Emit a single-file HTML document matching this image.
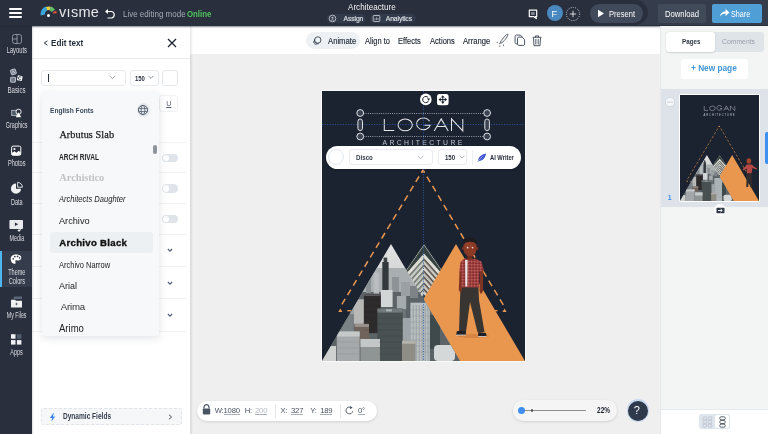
<!DOCTYPE html>
<html><head><meta charset="utf-8">
<style>
*{margin:0;padding:0;box-sizing:border-box}
html,body{width:768px;height:434px;overflow:hidden;background:#efefef;font-family:"Liberation Sans",sans-serif}
.a{position:absolute}
#top{left:0;top:0;width:768px;height:26px;background:#2a2f3d}
#side{left:0;top:26px;width:32px;height:408px;background:#2a2f3d}
#panel{left:32px;top:26px;width:158px;height:408px;background:#fff}
#canvas{left:190px;top:26px;width:470px;height:408px;background:#efefef}
#tbar{left:190px;top:26px;width:470px;height:28px;background:#fff}
#rpanel{left:660px;top:26px;width:108px;height:408px;background:#f3f5f5;border-left:1px solid #e6e9ec}
.lab{position:absolute;will-change:transform;left:-4px;width:40px;text-align:center;font-size:8.6px;line-height:1;color:#d9dbe0;transform:scaleX(0.64);white-space:nowrap}
.tog{position:absolute;left:161.6px;width:16px;height:8.3px;border-radius:5px;background:#dfe4ea}
.tog::after{content:"";position:absolute;left:1px;top:1px;width:6.3px;height:6.3px;border-radius:50%;background:#fff}
.tb{position:absolute;top:37.3px;font-size:8.5px;color:#232c38;-webkit-text-stroke:0.15px #232c38;white-space:nowrap;line-height:1;letter-spacing:-0.5px}
.bb{position:absolute;top:406.5px;font-size:7.7px;color:#4a5362;white-space:nowrap;line-height:1;letter-spacing:-0.2px}
.bb u{text-decoration:none;border-bottom:0.7px solid #a9afb7;display:inline-block;line-height:6.6px}
.t{position:absolute;white-space:nowrap;line-height:1}
</style></head><body><div id="root" style="position:absolute;left:0;top:0;width:768px;height:434px;will-change:transform">
<div id="top" class="a"></div>
<div class="a" style="left:620px;top:0;width:148px;height:25px;background:#353d4c"></div>
<div class="a" style="left:560px;top:0;width:87.5px;height:25px;border-radius:0 12.5px 12.5px 0;background:#2a2f3d"></div>
<div id="side" class="a"></div>
<!-- SIDEBAR -->
<div class="a" style="left:0;top:251px;width:32px;height:36px;background:#353d4c"></div>
<div class="a" style="left:0;top:251px;width:2px;height:36px;background:#4fb6f4"></div>
<svg class="a" style="left:0;top:26px" width="32" height="340" viewBox="0 26 32 340">
<!-- layouts -->
<rect x="12.5" y="34.5" width="9" height="9" rx="2" fill="none" stroke="#9a9ea8" stroke-width="0.85"/>
<path d="M17 34.5 V43.5 M12.5 39 H17" stroke="#9a9ea8" stroke-width="0.85"/>
<!-- basics -->
<g transform="rotate(-15 13.4 71.9)"><rect x="10.9" y="69.4" width="5" height="5" rx="0.6" fill="#6b7787" stroke="#c9cdd4" stroke-width="0.9"/><path d="M12.4 73.4 L13.4 70.5 L14.4 73.4" fill="none" stroke="#eef0f3" stroke-width="0.6"/></g>
<rect x="10.6" y="77.3" width="4.9" height="4.9" rx="0.5" fill="#6e7a8a" stroke="#c9cdd4" stroke-width="0.9"/>
<g transform="rotate(12 19.8 78.2)"><rect x="17.3" y="75.7" width="5" height="5" rx="0.6" fill="#f4f5f7"/><path d="M20.9 77.1 A1.5 1.5 0 1 0 20.9 79.3" fill="none" stroke="#2a2f3d" stroke-width="0.8"/></g>
<!-- graphics -->
<rect x="11.7" y="110.3" width="5.4" height="5.3" fill="#4f5a6a" stroke="#c0c5cc" stroke-width="0.8"/>
<circle cx="18.6" cy="111.8" r="2.6" fill="#2a2f3d" stroke="#fff" stroke-width="0.9"/>
<path d="M18.5 112.2 L21.2 117.2 H15.8 Z" fill="#fff"/>
<!-- photos -->
<rect x="11.6" y="146.1" width="9.2" height="9.2" rx="1.5" fill="none" stroke="#fff" stroke-width="1"/>
<circle cx="14.4" cy="149" r="1.1" fill="#fff"/>
<path d="M11.8 155 V153 L14.5 151.2 L16.5 152.8 L18.8 150.8 L20.6 152.5 V155 Z" fill="#fff"/>
<!-- data -->
<path d="M16 183.6 A5.1 5.1 0 1 0 21.1 188.7 H16 Z" fill="#eef0f2"/>
<path d="M17.6 182.4 A4.8 4.8 0 0 1 22.4 187.2 H17.6 Z" fill="none" stroke="#eef0f2" stroke-width="0.9"/>
<!-- media -->
<rect x="9.4" y="220" width="13.6" height="8.9" rx="1" fill="#e9ebee"/>
<path d="M14.9 222.6 L18.2 224.3 L14.9 226 Z" fill="#2a2f3d"/>
<path d="M20.3 224 V230.3" stroke="#e9ebee" stroke-width="0.9"/>
<ellipse cx="19" cy="230.6" rx="1.4" ry="1" fill="#e9ebee"/>
<!-- theme palette -->
<path d="M16 254.6 C11.5 254.6 10.7 257.8 10.7 259.3 C10.7 262 12.5 263.8 14.6 263.8 C15.8 263.8 15.8 262.6 15.4 261.7 C15 260.7 15.6 260 16.6 260.2 C18 260.5 19 260.6 20 260 C21 259.3 21.3 258.3 21.3 257.5 C21.3 255.8 19.2 254.6 16 254.6 Z" fill="#fff"/>
<circle cx="13.2" cy="258.8" r="0.9" fill="#353d4c"/><circle cx="14.8" cy="256.6" r="0.9" fill="#353d4c"/><circle cx="17.6" cy="256.3" r="0.9" fill="#353d4c"/><circle cx="19.6" cy="257.9" r="0.8" fill="#353d4c"/>
<!-- my files -->
<path d="M13.4 299 L14.3 296.6 H22 V299 Z" fill="#5b6778"/>
<path d="M11 299.7 H15 L16 300.8 H22 V307.6 H11 Z" fill="#eef0f2"/>
<path d="M16.5 302.5 L17.6 304 L16.5 305.5 L15.4 304 Z" fill="#555f6e"/>
<!-- apps -->
<rect x="11" y="334.2" width="4.5" height="4.5" fill="#f0f1f3"/>
<rect x="16.9" y="334.2" width="4.5" height="4.5" fill="#4f5c6d"/>
<rect x="11" y="340.1" width="4.5" height="4.5" fill="#f0f1f3"/>
<rect x="16.9" y="340.1" width="4.5" height="4.5" fill="#f0f1f3"/>
</svg>

<svg class="a" style="left:0;top:0;will-change:transform" width="32" height="434" viewBox="0 0 32 434">
<text x="6.7" y="53.2" textLength="20.2" lengthAdjust="spacingAndGlyphs" font-family="Liberation Sans" font-size="9.2" fill="#dddfe3">Layouts</text>
<text x="7.5" y="93.4" textLength="18.0" lengthAdjust="spacingAndGlyphs" font-family="Liberation Sans" font-size="9.2" fill="#dddfe3">Basics</text>
<text x="5.8" y="128.0" textLength="21.8" lengthAdjust="spacingAndGlyphs" font-family="Liberation Sans" font-size="9.2" fill="#dddfe3">Graphics</text>
<text x="7.9" y="165.6" textLength="17.6" lengthAdjust="spacingAndGlyphs" font-family="Liberation Sans" font-size="9.2" fill="#dddfe3">Photos</text>
<text x="11" y="204.7" textLength="11.7" lengthAdjust="spacingAndGlyphs" font-family="Liberation Sans" font-size="9.2" fill="#dddfe3">Data</text>
<text x="9.6" y="241.4" textLength="14.5" lengthAdjust="spacingAndGlyphs" font-family="Liberation Sans" font-size="9.2" fill="#dddfe3">Media</text>
<text x="8.2" y="274.8" textLength="17.2" lengthAdjust="spacingAndGlyphs" font-family="Liberation Sans" font-size="9.2" fill="#dddfe3">Theme</text>
<text x="8.7" y="283.5" textLength="16.3" lengthAdjust="spacingAndGlyphs" font-family="Liberation Sans" font-size="9.2" fill="#dddfe3">Colors</text>
<text x="6.8" y="318.0" textLength="19.7" lengthAdjust="spacingAndGlyphs" font-family="Liberation Sans" font-size="9.2" fill="#dddfe3">My Files</text>
<text x="10.3" y="355.0" textLength="12.4" lengthAdjust="spacingAndGlyphs" font-family="Liberation Sans" font-size="9.2" fill="#dddfe3">Apps</text>
</svg>
<div id="panel" class="a"></div>
<!-- LEFT PANEL -->
<svg class="a" style="left:43px;top:40px" width="6" height="6" viewBox="0 0 6 6"><path d="M4.4 0.8 L1.3 3 L4.4 5.2" fill="none" stroke="#1f2a38" stroke-width="1"/></svg>
<div class="t" style="left:50.5px;top:37.8px;font-size:9.6px;font-weight:bold;color:#1f2a38;transform:scaleX(0.85);transform-origin:0 0">Edit text</div>
<svg class="a" style="left:167px;top:38px" width="10" height="10" viewBox="0 0 10 10"><path d="M1 1 L9 9 M9 1 L1 9" stroke="#1d2633" stroke-width="1.3"/></svg>
<div class="a" style="left:32px;top:58px;width:158px;height:1px;background:#e9ecef"></div>
<div class="a" style="left:41px;top:70px;width:85px;height:15.5px;border:1px solid #e8ebee;border-radius:3px;background:#fff"></div>
<div class="a" style="left:48px;top:73.5px;width:1px;height:8px;background:#2b3340"></div>
<svg class="a" style="left:109px;top:75px" width="7" height="5" viewBox="0 0 7 5"><path d="M0.8 1 L3.5 3.6 L6.2 1" fill="none" stroke="#858d98" stroke-width="0.8"/></svg>
<div class="a" style="left:129.5px;top:70px;width:29px;height:15.5px;border:1px solid #e8ebee;border-radius:3px;background:#fff"></div>
<div class="t" style="left:135px;top:74.5px;font-size:7.2px;font-weight:bold;color:#2b3340;transform:scaleX(0.82);transform-origin:0 0">150</div>
<svg class="a" style="left:147.5px;top:75px" width="6" height="5" viewBox="0 0 6 5"><path d="M0.6 1 L3 3.4 L5.4 1" fill="none" stroke="#6f7782" stroke-width="0.8"/></svg>
<div class="a" style="left:161.5px;top:70px;width:16px;height:15.5px;border:1px solid #e3e7eb;border-radius:3px;background:#fff"></div>
<div class="a" style="left:159px;top:94.5px;width:18.6px;height:17.3px;border:1px solid #f0f2f4;border-radius:3px;background:#fff"></div>
<div class="t" style="left:166.3px;top:99.8px;font-size:7px;color:#505866;text-decoration:underline">U</div>
<div class="a" style="left:32px;top:141.5px;width:154px;height:1px;background:#f0f2f4"></div>
<div class="a" style="left:32px;top:172px;width:154px;height:1px;background:#f0f2f4"></div>
<div class="a" style="left:32px;top:203px;width:154px;height:1px;background:#f0f2f4"></div>
<div class="a" style="left:32px;top:233.5px;width:154px;height:1px;background:#f0f2f4"></div>
<div class="a" style="left:32px;top:266px;width:154px;height:1px;background:#f0f2f4"></div>
<div class="a" style="left:32px;top:298px;width:154px;height:1px;background:#f0f2f4"></div>
<div class="a" style="left:32px;top:331px;width:154px;height:1px;background:#f0f2f4"></div>
<div class="tog" style="top:153.7px"></div>
<div class="tog" style="top:184.3px"></div>
<div class="tog" style="top:215px"></div>
<svg class="a" style="left:167px;top:248px" width="6" height="5" viewBox="0 0 6 5"><path d="M0.9 1 L3 3.2 L5.1 1" fill="none" stroke="#56657d" stroke-width="1.25"/></svg>
<svg class="a" style="left:167px;top:280.5px" width="6" height="5" viewBox="0 0 6 5"><path d="M0.9 1 L3 3.2 L5.1 1" fill="none" stroke="#56657d" stroke-width="1.25"/></svg>
<svg class="a" style="left:167px;top:312.8px" width="6" height="5" viewBox="0 0 6 5"><path d="M0.9 1 L3 3.2 L5.1 1" fill="none" stroke="#56657d" stroke-width="1.25"/></svg>
<!-- dropdown -->
<div class="a" style="left:41.8px;top:91.8px;width:117px;height:244px;background:#f7f8fa;border-radius:3px;box-shadow:0 2px 9px rgba(30,40,60,0.13)"></div>
<div class="t" style="left:49.5px;top:107px;font-size:7.85px;font-weight:bold;color:#3b4a5e;transform:scaleX(0.84);transform-origin:0 0">English Fonts</div>
<div class="a" style="left:136.5px;top:103.3px;width:13.5px;height:13.5px;border-radius:50%;background:#e6eaee"></div>
<svg class="a" style="left:137.3px;top:103.7px" width="12" height="12" viewBox="0 0 12 12"><circle cx="6" cy="6" r="4.6" fill="none" stroke="#4b5565" stroke-width="0.9"/><ellipse cx="6" cy="6" rx="1.9" ry="4.6" fill="none" stroke="#4b5565" stroke-width="0.75"/><path d="M1.6 4.4 H10.4 M1.6 7.6 H10.4" stroke="#4b5565" stroke-width="0.75"/></svg>
<div class="a" style="left:153.3px;top:145.4px;width:3.5px;height:8.3px;border-radius:2px;background:#8e949c"></div>
<div class="t" style="left:59.4px;top:130px;font-family:'Liberation Serif',serif;font-size:10.2px;color:#1a1a1a;-webkit-text-stroke:0.25px #1a1a1a;letter-spacing:0.1px">Arbutus Slab</div>
<div class="t" style="left:59.2px;top:152.6px;font-size:8.3px;font-weight:bold;color:#222;transform:scaleX(0.79);transform-origin:0 0">ARCH RIVAL</div>
<div class="t" style="left:59.3px;top:173px;font-family:'Liberation Serif',serif;font-weight:bold;font-size:10.5px;color:#c3c3c3;letter-spacing:-0.1px">Archistico</div>
<div class="t" style="left:59.3px;top:195px;font-size:8.6px;font-style:italic;color:#222;transform:scaleX(0.881);transform-origin:0 0">Architects Daughter</div>
<div class="t" style="left:59.3px;top:216px;font-size:9.8px;color:#222;transform:scaleX(0.936);transform-origin:0 0">Archivo</div>
<div class="a" style="left:49.5px;top:231.6px;width:103.5px;height:21px;border-radius:3px;background:#edf0f3"></div>
<div class="t" style="left:59.3px;top:237.8px;font-size:9.6px;font-weight:bold;color:#111;-webkit-text-stroke:0.35px #111;letter-spacing:0.3px">Archivo Black</div>
<div class="t" style="left:59px;top:259.5px;font-size:9.6px;color:#222;transform:scaleX(0.78);transform-origin:0 0">Archivo Narrow</div>
<div class="t" style="left:59px;top:280.5px;font-size:9.7px;color:#222;transform:scaleX(0.928);transform-origin:0 0">Arial</div>
<div class="t" style="left:60.7px;top:301.8px;font-size:9.7px;color:#333;letter-spacing:-0.2px">Arima</div>
<div class="t" style="left:58.6px;top:323.5px;font-size:10.3px;color:#222;transform:scaleX(0.926);transform-origin:0 0">Arimo</div>
<!-- dynamic fields -->
<div class="a" style="left:41.2px;top:408.2px;width:140.7px;height:17.2px;border:1px dashed #dfe4ea;border-radius:3px;background:#f6f7f8"></div>
<svg class="a" style="left:49px;top:412.5px" width="7" height="9" viewBox="0 0 7 9"><path d="M4.2 0.3 L0.8 5 H3.2 L2.3 8.7 L6.2 3.6 H3.8 L5 0.3 Z" fill="#3b86ee"/></svg>
<div class="t" style="left:63px;top:412.6px;font-size:8.2px;font-weight:bold;color:#343c4a;transform:scaleX(0.8);transform-origin:0 0">Dynamic Fields</div>
<svg class="a" style="left:168px;top:414px" width="5" height="6" viewBox="0 0 5 6"><path d="M1 0.8 L3.6 3 L1 5.2" fill="none" stroke="#3a4250" stroke-width="0.9"/></svg>

<div class="a" style="left:32px;top:26px;width:2px;height:408px;background:linear-gradient(90deg,rgba(0,0,0,0.12),rgba(0,0,0,0))"></div>
<div id="canvas" class="a"></div>
<div id="tbar" class="a"></div>
<div class="a" style="left:190px;top:26px;width:3px;height:408px;background:linear-gradient(90deg,rgba(0,0,0,0.1),rgba(0,0,0,0))"></div>
<div class="a" style="left:0;top:26px;width:768px;height:2px;background:linear-gradient(180deg,rgba(30,35,48,0.55),rgba(30,35,48,0))"></div>
<!-- TOP BAR -->
<div class="a" style="left:9px;top:8px;width:13px;height:2px;background:#fff;border-radius:1px"></div>
<div class="a" style="left:9px;top:12px;width:13px;height:2px;background:#fff;border-radius:1px"></div>
<div class="a" style="left:9px;top:16px;width:13px;height:2px;background:#fff;border-radius:1px"></div>
<svg class="a" style="left:0;top:0" width="60" height="26" viewBox="0 0 60 26">
<path d="M40.77 15.46 A8.0 8.0 0 0 1 45.60 6.38 L47.25 10.46 A3.6 3.6 0 0 0 45.08 14.55 Z" fill="#3aa6de"/>
<path d="M45.83 6.94 A7.4 7.4 0 0 1 50.89 6.76 L49.77 10.19 A3.8 3.8 0 0 0 47.18 10.28 Z" fill="#e6d24a"/>
<path d="M50.95 6.57 A7.6 7.6 0 0 1 55.05 9.77 L51.48 12.00 A3.4 3.4 0 0 0 49.65 10.57 Z" fill="#62bd6c"/>
<path d="M56.20 10.73 A8.2 8.2 0 0 1 56.78 13.23 L53.19 13.48 A4.6 4.6 0 0 0 52.87 12.08 Z" fill="#e2553f"/>
<circle cx="48.5" cy="15.6" r="1.5" fill="#fff"/>
</svg>
<div class="t" style="left:59px;top:5px;font-size:14.5px;color:#e6e7ea;letter-spacing:0.3px">v&#305;sme</div>
<svg class="a" style="left:104px;top:8px" width="12" height="11" viewBox="0 0 12 11">
<path d="M3 3.5 H7.5 A3.3 3.3 0 0 1 7.5 10 H3.5" fill="none" stroke="#fff" stroke-width="1.2"/>
<path d="M1 3.5 L4 1 L4 6 Z" fill="#fff"/>
</svg>
<div class="t" style="left:122.5px;top:10px;font-size:8.6px;color:#a7abb4;transform:scaleX(0.929);transform-origin:0 0">Live editing mode</div>
<div class="t" style="left:186.5px;top:10px;font-size:8.6px;color:#4fc25d;font-weight:bold;transform:scaleX(0.907);transform-origin:0 0">Online</div>

<div class="t" style="left:348.3px;top:3px;font-size:8.8px;color:#f2f2f4;transform:scaleX(0.919);transform-origin:0 0">Architeacture</div>
<div class="a" style="left:327px;top:14px;width:39px;height:9.2px;border-radius:5px;background:#323b4b"></div>
<svg class="a" style="left:328px;top:14px" width="9" height="9" viewBox="0 0 9 9"><circle cx="4.5" cy="4.5" r="3.3" fill="none" stroke="#bfc3ca" stroke-width="0.9"/><circle cx="4.5" cy="3.8" r="1" fill="#bfc3ca"/><path d="M2.8 6.5 Q4.5 4.8 6.2 6.5" fill="none" stroke="#bfc3ca" stroke-width="0.8"/></svg>
<div class="t" style="left:343.5px;top:15.5px;font-size:6.8px;color:#dde0e5;-webkit-text-stroke:0.15px #dde0e5;letter-spacing:-0.1px">Assign</div>
<div class="a" style="left:370px;top:14px;width:46px;height:9.2px;border-radius:5px;background:#323b4b"></div>
<svg class="a" style="left:372px;top:14px" width="9" height="9" viewBox="0 0 9 9"><rect x="1.2" y="1.5" width="6.6" height="6" rx="0.8" fill="none" stroke="#bfc3ca" stroke-width="0.9"/><path d="M3 6 V4.5 M4.5 6 V3.3 M6 6 V4" stroke="#bfc3ca" stroke-width="0.7"/></svg>
<div class="t" style="left:385.8px;top:15.5px;font-size:6.8px;color:#dde0e5;-webkit-text-stroke:0.15px #dde0e5;letter-spacing:-0.12px">Analytics</div>

<svg class="a" style="left:528px;top:8.5px" width="11" height="11" viewBox="0 0 11 11"><path d="M1.3 1.2 H8.7 V7.6 H7.4 L8.4 9.6 L5.6 7.6 H1.3 Z" fill="#2a2f3d" stroke="#fff" stroke-width="1.2" stroke-linejoin="round"/><rect x="3" y="3.2" width="3.6" height="2.6" fill="#8a8f99"/></svg>
<div class="a" style="left:546.6px;top:5.1px;width:16.4px;height:16.4px;border-radius:50%;background:#4a89bf"></div>
<div class="t" style="left:551.5px;top:9.5px;font-size:9px;color:#fff">F</div>
<svg class="a" style="left:564.5px;top:5.5px" width="16" height="16" viewBox="0 0 16 16"><circle cx="8" cy="8" r="6.6" fill="none" stroke="#e9eaee" stroke-width="0.8" stroke-dasharray="1 1.2"/><path d="M8 4.8 V11.2 M4.8 8 H11.2" stroke="#fff" stroke-width="0.8"/></svg>
<div class="a" style="left:590px;top:4px;width:53px;height:19px;border-radius:10px;background:#414a5a"></div>
<svg class="a" style="left:597px;top:9px" width="8" height="9" viewBox="0 0 8 9"><path d="M1 0.8 L7 4.5 L1 8.2 Z" fill="#fff"/></svg>
<div class="t" style="left:608.7px;top:9.5px;font-size:8.6px;color:#fff;transform:scaleX(0.878);transform-origin:0 0">Present</div>
<div class="a" style="left:658px;top:4px;width:48px;height:19px;border-radius:2px;background:#414a59"></div>
<div class="t" style="left:665px;top:9.5px;font-size:8.4px;color:#fff;transform:scaleX(0.916);transform-origin:0 0">Download</div>
<div class="a" style="left:712px;top:4px;width:50px;height:19px;border-radius:2px;background:#4f9fd6"></div>
<svg class="a" style="left:719px;top:8px" width="11" height="10" viewBox="0 0 11 10"><path d="M1 8.5 C1.5 5 4 3.5 6.5 3.5 V1 L10.5 4.5 L6.5 8 V5.5 C4.5 5.5 2.5 6.2 1 8.5 Z" fill="#fff"/></svg>
<div class="t" style="left:731.3px;top:9.5px;font-size:8.4px;color:#fff;transform:scaleX(0.857);transform-origin:0 0">Share</div>

<!-- DESIGN -->
<div class="a" style="left:321px;top:90px;width:205px;height:272px;background:#fff;opacity:0.6"></div>
<svg class="a" style="left:322px;top:91px" width="203" height="270" viewBox="322 91 203 270">
<defs>
<clipPath id="cT"><path d="M391 244 L460 361 L322 361 Z"/></clipPath>
<clipPath id="sT"><path d="M424 244 L504 361 L344 361 Z"/></clipPath>
<linearGradient id="sky" x1="0" y1="0" x2="0" y2="1"><stop offset="0" stop-color="#e4e4e4"/><stop offset="0.3" stop-color="#cfd2d3"/><stop offset="0.55" stop-color="#9a9fa3"/><stop offset="1" stop-color="#6f7579"/></linearGradient>
<pattern id="plaid" width="3" height="3" patternUnits="userSpaceOnUse"><rect width="3" height="3" fill="#9a3737"/><path d="M0 0.7 H3 M0.7 0 V3" stroke="#c96a64" stroke-width="0.6"/><path d="M0 2.2 H3 M2.2 0 V3" stroke="#6e2428" stroke-width="0.4"/></pattern>
</defs>
<g id="scene"><rect x="322" y="91" width="203" height="270" fill="#1b2230"/>
<!-- dashed triangle -->
<path d="M423 170 L340.3 307 M423 170 L504.5 307" stroke="#e9974f" stroke-width="1.5" stroke-dasharray="6.4 4.6" stroke-dashoffset="3.4" fill="none"/>
<path d="M420.9 172.8 L425.1 172.8 L423 169.2 Z" fill="#e9974f"/><path d="M338.2 312 L342.4 312 L340.3 308.4 Z" fill="#e9974f"/><path d="M347.3 310.7 H351.3" stroke="#e9974f" stroke-width="1.4"/>
<path d="M502.4 312 L506.6 312 L504.5 308.4 Z" fill="#e9974f"/><path d="M497.5 310.7 H493.5" stroke="#e9974f" stroke-width="1.4"/>
<!-- stripes triangle -->
<g clip-path="url(#sT)">
<rect x="340" y="244" width="170" height="117" fill="#34403f"/>
<g fill="none" stroke-width="3.2">
<path d="M374 312 L424 256 L474 312" stroke="#dcdcd5"/>
<path d="M374 318 L424 262 L474 318" stroke="#c9cac3"/>
<path d="M374 324 L424 268 L474 324" stroke="#d6d6cf"/>
<path d="M374 330 L424 274 L474 330" stroke="#c2c3bc"/>
<path d="M374 336 L424 280 L474 336" stroke="#d2d2cb"/>
<path d="M374 342 L424 286 L474 342" stroke="#c5c5be"/>
<path d="M374 348 L424 292 L474 348" stroke="#d0d0c9"/>
</g>
<g fill="none" stroke-width="1.6">
<path d="M424 259.5 L474 315.5" stroke="#6b5f58"/>
<path d="M424 265.5 L474 321.5" stroke="#6e625a"/>
<path d="M424 271.5 L474 327.5" stroke="#675b54"/>
<path d="M424 277.5 L474 333.5" stroke="#6b5f58"/>
<path d="M424 283.5 L474 339.5" stroke="#6e625a"/>
<path d="M424 289.5 L474 345.5" stroke="#675b54"/>
<path d="M374 315.5 L424 259.5 M374 321.5 L424 265.5 M374 327.5 L424 271.5 M374 333.5 L424 277.5 M374 339.5 L424 283.5" stroke="#7d8581"/>
</g>
<path d="M424 244.6 L504 361 M424 244.6 L344 361" stroke="#b3b4ad" stroke-width="1" fill="none"/>
</g>
<!-- orange triangle -->
<path d="M456 244 L525 361 L387 361 Z" fill="#e9974f"/>
<!-- city triangle -->
<g clip-path="url(#cT)">
<rect x="322" y="244" width="140" height="117" fill="url(#sky)"/>
<rect x="322" y="290" width="140" height="71" fill="#5d6468"/>
<rect x="360" y="268" width="62" height="24" fill="#a9aeb1"/>
<rect x="366" y="279" width="5" height="14" fill="#8a9094"/>
<rect x="373.6" y="272.5" width="5.4" height="21" fill="#b9bdc0"/>
<rect x="392" y="277" width="7" height="15" fill="#8d9397"/>
<rect x="401" y="282" width="9" height="14" fill="#9aa0a4"/>
<rect x="410" y="286" width="8" height="12" fill="#7d8387"/>
<rect x="382.3" y="262" width="6.3" height="28" fill="#33383d"/>
<rect x="383.6" y="257.6" width="3.6" height="5" fill="#3b4045"/>
<rect x="380.8" y="290" width="11.8" height="17" fill="#d3d6d7"/>
<rect x="396.9" y="296" width="9.3" height="13" fill="#a5aaad"/>
<rect x="353.7" y="299.3" width="10.2" height="24.6" fill="#b8b9b6"/>
<rect x="335" y="313.7" width="18.7" height="18.6" fill="#7b8286"/>
<rect x="340" y="305" width="14" height="9" fill="#9ea3a5"/>
<rect x="363.9" y="294.2" width="16.9" height="39" fill="#2e2b2d"/>
<rect x="363.9" y="294.2" width="16.9" height="1.8" fill="#5a585a"/>
<rect x="354.5" y="323.9" width="14.5" height="20.1" fill="#6f635b"/>
<rect x="354.5" y="323.9" width="14.5" height="3" fill="#9a918b"/>
<rect x="392" y="309" width="14" height="20" fill="#6d7478"/>
<rect x="426.5" y="315" width="13.5" height="34" fill="#3e4a4c"/>
<rect x="402" y="318" width="8.5" height="23" fill="#9fa6a9"/>
<rect x="377.4" y="308.6" width="25.4" height="52.4" fill="#4a5152"/>
<rect x="377.4" y="308.6" width="25.4" height="4" fill="#737a7d"/>
<rect x="386" y="309.2" width="6" height="2.2" fill="#a9afb2"/>
<rect x="410.4" y="302.7" width="19.5" height="58.3" fill="#b9c0c2"/>
<path d="M413.2 305 V361 M416.2 305 V361 M419.2 305 V361 M422.2 305 V361 M425.2 305 V361 M428 305 V361" stroke="#8a9396" stroke-width="0.7"/>
<path d="M410.4 310 H430 M410.4 316 H430 M410.4 322 H430 M410.4 328 H430 M410.4 334 H430 M410.4 340 H430 M410.4 346 H430 M410.4 352 H430" stroke="#8a9396" stroke-width="0.4"/>
<rect x="336.8" y="331.5" width="22.8" height="29.5" fill="#a5a9ab"/>
<rect x="336.8" y="331.5" width="22.8" height="5" fill="#c5c9ca"/>
<rect x="360.5" y="339" width="19.5" height="22" fill="#8f9495"/>
<rect x="360.5" y="339" width="19.5" height="8" fill="#c3c7c8"/>
<rect x="402" y="340.8" width="13.5" height="20.2" fill="#8e8d86"/>
<rect x="402" y="340.8" width="13.5" height="3" fill="#b4b2ab"/>
<rect x="430" y="349" width="10" height="12" fill="#5b6265"/>
<rect x="434" y="345" width="21" height="16" rx="4" fill="#d5d8d8"/>
<rect x="322" y="346" width="14" height="15" fill="#cfd1d0"/>
<g stroke="#000" stroke-opacity="0.14" stroke-width="0.5">
<path d="M378 318 H402 M378 324 H402 M378 330 H402 M378 336 H402 M378 342 H402 M378 348 H402 M378 354 H402"/>
<path d="M364 300 H381 M364 306 H381 M364 312 H381 M364 318 H381 M364 324 H381 M364 330 H381"/>
<path d="M337 342 H359 M337 348 H359 M337 354 H359"/>
</g>
</g>
</g>
<!-- character -->
<ellipse cx="473" cy="336" rx="16" ry="2" fill="#c9793c" opacity="0.6"/>
<path d="M460.5 287 L478.5 287 L479 300 L484.5 332 L477.5 332 L470 302 L466 332 L459 332 L460 300 Z" fill="#383432"/>
<path d="M456 335 L457 331 L465.8 331 L466 335 Z" fill="#1e2026"/><path d="M456 335 H466" stroke="#ddd" stroke-width="0.8"/>
<path d="M478 336.5 L478.3 332 L486 333 L486.6 336.5 Z" fill="#1e2026"/><path d="M478 336.5 H486.6" stroke="#ddd" stroke-width="0.8"/>
<path d="M480 270 L483.3 269.5 L483 291 L481 294.5 L479.5 291 Z" fill="#7e3422"/>
<path d="M459.5 272 L462 272 L462 290 L460.5 293 L458.8 290 Z" fill="#7e3422"/>
<path d="M464 258.8 L475.5 258.8 L481.5 261.5 L483.8 270.5 L479.6 271.5 L479 287.5 L461 287.5 L461.2 272 L459 272.5 L460.5 262 Z" fill="url(#plaid)"/>
<path d="M465.1 260 L467.6 260 L467.3 286.5 L465.4 286.5 Z" fill="#e6e6e6"/>
<path d="M467.2 254.5 H472.5 V259.5 H467.2 Z" fill="#6e2c1c"/>
<path d="M463.3 247.5 C463.3 242 466 240.5 470 240.5 C474 240.5 476.8 242 476.8 247.5 C476.8 252.5 474 256.3 470 256.3 C466 256.3 463.3 252.5 463.3 247.5 Z" fill="#8a3925"/>
<ellipse cx="462.8" cy="248.3" rx="1" ry="1.6" fill="#7a3120"/><ellipse cx="477.3" cy="248.3" rx="1" ry="1.6" fill="#7a3120"/>
<ellipse cx="468.5" cy="246" rx="3.5" ry="3.2" fill="#a04a30" opacity="0.5"/>
<path d="M463.6 245 C463 239.5 466 237.3 470 237.6 C474.5 237.3 477.2 240 476.4 245 C475.5 242.8 473 241.6 470 241.8 C467 241.6 464.5 242.8 463.6 245 Z" fill="#1c1c21"/>
<circle cx="467.6" cy="247.6" r="0.85" fill="#e3dcd4"/><circle cx="472.5" cy="247.6" r="0.85" fill="#e3dcd4"/>
<!-- text -->
<g id="logan"><g fill="none" stroke="#e4e6e9" stroke-width="1.05">
<path d="M384.3 118.9 V130.4 H394.2"/>
<ellipse cx="405.2" cy="124.9" rx="7.1" ry="5.9"/>
<path d="M429.6 121.2 A6.9 5.9 0 1 0 430.1 125.3 H424.5"/>
<path d="M434.2 130.9 L441.2 118.9 L448.2 130.9 M436.9 126.4 H445.5"/>
<path d="M451.5 130.9 V118.9 L462.8 130.9 V118.9"/>
</g>
<text x="423.6" y="144.8" text-anchor="middle" font-family="Liberation Sans" font-size="6.8" fill="#c0c4ca" letter-spacing="2.42">ARCHITECTURE</text></g>

<!-- guides -->
<path d="M322 124.5 H525" stroke="#2a5cb0" stroke-width="0.85" stroke-dasharray="1.1 1.5"/>
<path d="M423.5 91 V361" stroke="#2a5cb0" stroke-width="0.85" stroke-dasharray="1.1 1.5"/>
<!-- selection -->
<path d="M363.5 113.5 H483.5 M363.5 136.5 H483.5" stroke="#c9ccd2" stroke-width="0.8" stroke-dasharray="0.9 1.3"/>
<g fill="#3b4352" stroke="#dfe2e6" stroke-width="1">
<circle cx="360.2" cy="113" r="3.4"/><circle cx="487.1" cy="113" r="3.4"/>
<circle cx="360.2" cy="136.5" r="3.4"/><circle cx="487.1" cy="136.5" r="3.4"/>
<rect x="357.9" y="119" width="4.6" height="11.6" rx="2.3"/><rect x="484.8" y="119" width="4.6" height="11.6" rx="2.3"/>
</g>
<circle cx="425.8" cy="99.4" r="5.8" fill="#fff"/>
<path d="M428.2 97.6 A3.1 3.1 0 1 0 428.7 100.6" fill="none" stroke="#1b2230" stroke-width="1"/><path d="M426.9 98.4 L430.3 98.4 L428.6 100.6 Z" fill="#1b2230"/>
<rect x="437" y="94" width="11.6" height="11.2" rx="2.5" fill="#fff"/>
<path d="M442.8 96.5 V102.7 M439.7 99.6 H445.9" stroke="#1b2230" stroke-width="1"/>
<path d="M442.8 95.3 L441 97.6 H444.6 Z M442.8 103.9 L441 101.6 H444.6 Z M438.5 99.6 L440.8 97.8 V101.4 Z M447.1 99.6 L444.8 97.8 V101.4 Z" fill="#1b2230"/>
</svg>
<!-- floating toolbar -->
<div class="a" style="left:326.3px;top:145.9px;width:194.7px;height:22.8px;border-radius:11.4px;background:#fff;box-shadow:0 1px 2px rgba(0,0,0,0.2)"></div>
<div class="a" style="left:328.4px;top:149.4px;width:16px;height:16px;border-radius:50%;border:1px solid #e3e8ef;background:#fff"></div>
<div class="a" style="left:348.7px;top:149.2px;width:84.4px;height:16.2px;border-radius:3px;border:1px solid #e8ebef"></div>
<div class="t" style="left:355.6px;top:154px;font-size:7.4px;color:#1f2733;font-weight:bold;transform:scaleX(0.84);transform-origin:0 0;opacity:0.92">Disco</div>
<svg class="a" style="left:417px;top:154.8px" width="7" height="5" viewBox="0 0 7 5"><path d="M0.7 1 L3.5 3.7 L6.3 1" fill="none" stroke="#a0a6ae" stroke-width="0.8"/></svg>
<div class="a" style="left:438.3px;top:149.2px;width:29.1px;height:16.2px;border-radius:3px;border:1px solid #e8ebef"></div>
<div class="t" style="left:444.8px;top:154px;font-size:7.4px;color:#1f2733;font-weight:bold;transform:scaleX(0.82);transform-origin:0 0">150</div>
<svg class="a" style="left:459.4px;top:155px" width="6" height="4" viewBox="0 0 6 4"><path d="M0.5 0.7 L3 3 L5.5 0.7" fill="none" stroke="#a0a6ae" stroke-width="0.8"/></svg>
<div class="a" style="left:472.2px;top:149.8px;width:0.8px;height:15.4px;background:#eceff2"></div>
<svg class="a" style="left:475.5px;top:152.5px" width="11" height="10" viewBox="0 0 11 10"><path d="M0.6 9.6 L2.2 7.6 C2.2 4.8 5 1.6 10 0.6 C9.6 4.6 7 7.8 3 8 Z" fill="#3f57d6"/><path d="M1.2 9 L6.5 3.5" stroke="#fff" stroke-width="0.45"/></svg>
<div class="t" style="left:489.7px;top:154px;font-size:7.2px;color:#1f2733;font-weight:bold;transform:scaleX(0.8);transform-origin:0 0">AI Writer</div>

<!-- TOOLBAR -->
<div class="a" style="left:305.9px;top:31.9px;width:54.6px;height:17px;border-radius:9px;background:#edf1f4"></div>
<svg class="a" style="left:312px;top:36px" width="10" height="10" viewBox="0 0 10 10"><circle cx="5.8" cy="4" r="3.2" fill="none" stroke="#3a4452" stroke-width="0.9"/><path d="M2.7 3.2 A3.2 3.2 0 0 0 6.8 7.6" fill="none" stroke="#3a4452" stroke-width="0.9"/><path d="M1.6 5 A3 3 0 0 0 4.6 8.6" fill="none" stroke="#3a4452" stroke-width="0.7"/></svg>
<div class="tb" style="left:327.6px;letter-spacing:0;transform:scaleX(0.904);transform-origin:0 0">Animate</div>
<div class="tb" style="left:365px;letter-spacing:0;transform:scaleX(0.877);transform-origin:0 0">Align to</div>
<div class="tb" style="left:398.3px;letter-spacing:0;transform:scaleX(0.884);transform-origin:0 0">Effects</div>
<div class="tb" style="left:430px;letter-spacing:0;transform:scaleX(0.892);transform-origin:0 0">Actions</div>
<div class="tb" style="left:463.3px;letter-spacing:0;transform:scaleX(0.901);transform-origin:0 0">Arrange</div>
<svg class="a" style="left:495px;top:33px" width="15" height="15" viewBox="0 0 15 15"><path d="M12.6 1 C13.6 1.6 11.6 5.6 8 8.8 L6.1 10.2 L5.2 9.4 L6.4 7.4 C8.8 4.2 11.4 1.3 12.6 1 Z" fill="none" stroke="#3a4452" stroke-width="0.85"/><path d="M5.6 9.8 L4.3 11.2" stroke="#3a4452" stroke-width="1"/><circle cx="2.2" cy="9.6" r="0.6" fill="#3a4452"/><circle cx="4.8" cy="13.1" r="0.65" fill="#3a4452"/><circle cx="8.4" cy="12.2" r="0.6" fill="#3a4452"/></svg>
<svg class="a" style="left:514px;top:34px" width="12" height="12" viewBox="0 0 12 12"><path d="M3.2 9.8 H2.3 C1.6 9.8 1.1 9.3 1.1 8.6 V2.3 C1.1 1.6 1.6 1.1 2.3 1.1 H6.5 L8.3 2.9" fill="none" stroke="#3a4452" stroke-width="0.9"/><path d="M3.5 4.3 C3.5 3.6 4 3.1 4.7 3.1 H8 L10.6 5.7 V10.2 C10.6 10.9 10.1 11.4 9.4 11.4 H4.7 C4 11.4 3.5 10.9 3.5 10.2 Z" fill="none" stroke="#3a4452" stroke-width="0.9"/></svg>
<svg class="a" style="left:532px;top:35px" width="10" height="12" viewBox="0 0 10 12"><path d="M0.6 2.3 H9.4 M3.5 2.3 V0.9 H6.5 V2.3" fill="none" stroke="#3a4452" stroke-width="0.9"/><path d="M1.5 2.8 L2 10.7 H8 L8.5 2.8" fill="none" stroke="#3a4452" stroke-width="0.9"/><path d="M3.5 4 V9.5 M5 4 V9.5 M6.5 4 V9.5" stroke="#3a4452" stroke-width="0.6"/></svg>
<!-- bottom bar -->
<div class="a" style="left:196.5px;top:401px;width:180.5px;height:19.7px;border-radius:10px;background:#fff;box-shadow:0 1px 3px rgba(0,0,0,0.12)"></div>
<svg class="a" style="left:201.5px;top:404px" width="9" height="11" viewBox="0 0 9 11"><path d="M2 4.5 V3.2 A2.5 2.5 0 0 1 7 3.2 V4.5" fill="none" stroke="#4a5362" stroke-width="1.2"/><rect x="0.8" y="4.4" width="7.4" height="6" rx="0.8" fill="#4a5362"/></svg>
<div class="bb" style="left:214.7px">W:<u>1080</u></div>
<div class="bb" style="left:244.7px">H:</div>
<div class="bb" style="left:255px;color:#b4b9c0"><u>200</u></div>
<div class="a" style="left:275px;top:404px;width:1px;height:14px;background:#e4e7ea"></div>
<div class="bb" style="left:280.6px">X:</div>
<div class="bb" style="left:291px"><u>327</u></div>
<div class="bb" style="left:310.3px">Y:</div>
<div class="bb" style="left:320.2px"><u>189</u></div>
<div class="a" style="left:340.3px;top:404px;width:1px;height:14px;background:#e4e7ea"></div>
<svg class="a" style="left:344.5px;top:405.5px" width="9" height="9" viewBox="0 0 9 9"><path d="M7.6 5.2 A3.3 3.3 0 1 1 5.5 1.4" fill="none" stroke="#4a5362" stroke-width="0.9"/><path d="M5 0 L7.6 1.6 L5.2 3.2 Z" fill="#4a5362"/></svg>
<div class="bb" style="left:358px"><u>0°</u></div>
<!-- zoom -->
<div class="a" style="left:512.9px;top:399.8px;width:104.6px;height:21px;border-radius:11px;background:#f5f5f5;box-shadow:0 1px 3px rgba(0,0,0,0.13)"></div>
<div class="a" style="left:521.7px;top:410px;width:64px;height:1px;background:#8e8e8e"></div>
<div class="a" style="left:518.4px;top:407px;width:7px;height:7px;border-radius:50%;background:#3d8ef0"></div>
<div class="a" style="left:530.7px;top:409.1px;width:2.6px;height:2.6px;border-radius:50%;background:#555"></div>
<div class="t" style="left:596.7px;top:406.4px;font-size:8.4px;font-weight:bold;color:#1d2530;transform:scaleX(0.78);transform-origin:0 0">22%</div>
<div class="a" style="left:626.5px;top:399.3px;width:22.5px;height:22.5px;border-radius:50%;background:#c9d8ef"></div>
<div class="a" style="left:627.7px;top:400.5px;width:20px;height:20px;border-radius:50%;background:#2e3a4b"></div>
<div class="t" style="left:633.7px;top:404.5px;font-size:11px;color:#fff">?</div>

<div id="rpanel" class="a"></div>
<!-- RIGHT PANEL -->
<div class="a" style="left:666px;top:32px;width:97.7px;height:20px;border-radius:3px;background:#dfe4e9"></div>
<div class="a" style="left:666px;top:32.3px;width:49.3px;height:19.7px;border-radius:3px;background:#fff;box-shadow:0 0.5px 1.5px rgba(0,0,0,0.15)"></div>
<div class="t" style="left:681.5px;top:38.3px;font-size:7.8px;color:#2d3642;font-weight:bold;transform:scaleX(0.8);transform-origin:0 0">Pages</div>
<div class="t" style="left:722.2px;top:38.3px;font-size:7.8px;color:#98a0aa;transform:scaleX(0.875);transform-origin:0 0">Comments</div>
<div class="a" style="left:681px;top:58.8px;width:67px;height:20.2px;border-radius:3px;background:#fff"></div>
<div class="t" style="left:691.3px;top:64px;font-size:9.2px;color:#3f94d2;font-weight:bold;transform:scaleX(0.9);transform-origin:0 0">+ New page</div>
<div class="a" style="left:661px;top:88.7px;width:107px;height:118.3px;background:#dde3e9"></div>
<svg class="a" style="left:664px;top:96px" width="12" height="12" viewBox="0 0 12 12"><circle cx="6" cy="6" r="4.6" fill="#f4f6f8" stroke="#cdd4dc" stroke-width="0.8"/><circle cx="4" cy="6" r="0.6" fill="#98a1ab"/><circle cx="6" cy="6" r="0.6" fill="#98a1ab"/><circle cx="8" cy="6" r="0.6" fill="#98a1ab"/></svg>
<div class="a" style="left:679.3px;top:94.3px;width:80.4px;height:107.3px;border-radius:2px;background:#fff"></div>
<svg class="a" style="left:680px;top:95px" width="79" height="106" viewBox="322 91 203 270" preserveAspectRatio="none">
<use href="#scene"/>
<path d="M494 290 L506 290 L508 325 L503 326 L500 300 L497 326 L492 325 Z" fill="#2f2d2c"/>
<path d="M493 268 L507 268 L510 272 L520 278 L519 281 L508 277 L506 290 L494 290 L493 278 L485 283 L483 280 L491 272 Z" fill="#b84844"/>
<ellipse cx="499" cy="259" rx="6" ry="7" fill="#a4452c"/>
<use href="#logan"/>
</svg>
<div class="t" style="left:667.8px;top:193.5px;font-size:7px;color:#3d8ff0;font-weight:bold">1</div>
<div class="a" style="left:713.5px;top:203.8px;width:12.5px;height:12.5px;border-radius:50%;background:#fff"></div>
<svg class="a" style="left:715.5px;top:206.5px" width="9" height="7" viewBox="0 0 9 7"><rect x="0.5" y="0.8" width="8" height="5.4" rx="0.6" fill="#2c3747"/><path d="M2 3.5 H6 M4.5 2 L6.3 3.5 L4.5 5" fill="none" stroke="#fff" stroke-width="0.9"/></svg>
<div class="a" style="left:765px;top:132.2px;width:3px;height:31.8px;border-radius:2px 0 0 2px;background:#3d8ff0"></div>
<div class="a" style="left:661px;top:409px;width:107px;height:25px;background:#fff;border-top:1px solid #e6eaee"></div>
<div class="a" style="left:699.1px;top:413.5px;width:30.9px;height:15.9px;border-radius:2.5px;background:#dfe5ec"></div>
<div class="a" style="left:715.1px;top:414.6px;width:14.1px;height:13.7px;border-radius:2px;background:#fff"></div>
<svg class="a" style="left:702px;top:415.5px" width="11" height="12" viewBox="0 0 11 12"><g fill="none" stroke="#b6bfca" stroke-width="0.7"><rect x="1" y="0.8" width="3.6" height="3" rx="0.8"/><rect x="6.2" y="0.8" width="3.6" height="3" rx="0.8"/><rect x="1" y="4.5" width="3.6" height="3" rx="0.8"/><rect x="6.2" y="4.5" width="3.6" height="3" rx="0.8"/><rect x="1" y="8.2" width="3.6" height="3" rx="0.8"/><rect x="6.2" y="8.2" width="3.6" height="3" rx="0.8"/></g></svg>
<svg class="a" style="left:718.5px;top:415.5px" width="7" height="12" viewBox="0 0 7 12"><g fill="none" stroke="#3a4452" stroke-width="0.8"><rect x="0.8" y="0.8" width="5.4" height="3" rx="1.2"/><rect x="0.8" y="4.5" width="5.4" height="3" rx="1.2"/><rect x="0.8" y="8.2" width="5.4" height="3" rx="1.2"/></g></svg>

</div></body></html>
